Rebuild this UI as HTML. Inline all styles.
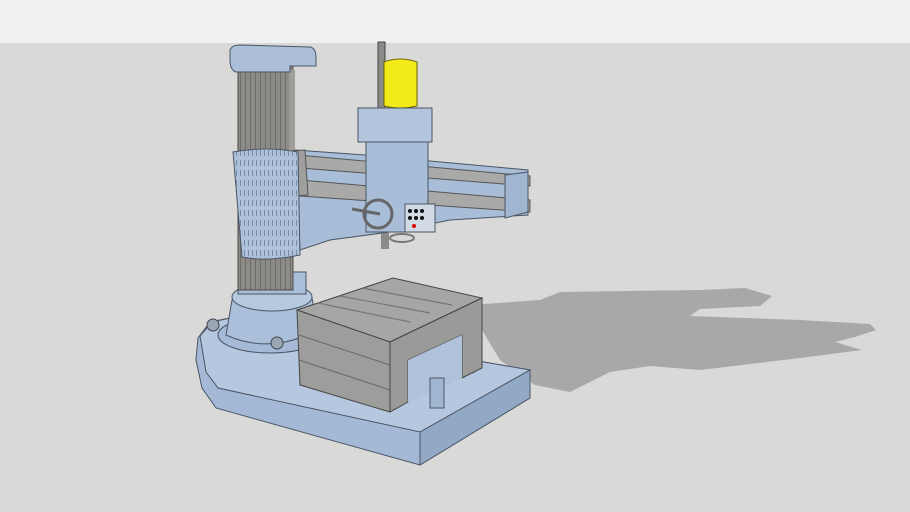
<!DOCTYPE html>
<html><head><style>html,body{margin:0;padding:0;width:910px;height:512px;overflow:hidden;background:#d9d9d7}</style></head>
<body>
<svg width="910" height="512" viewBox="0 0 910 512" xmlns="http://www.w3.org/2000/svg">
<defs>
<pattern id="col" width="5" height="10" patternUnits="userSpaceOnUse"><rect width="5" height="10" fill="#8d8b88"/><rect x="0" width="1" height="10" fill="#6e6c69"/></pattern>
<pattern id="slv" width="4" height="10" patternUnits="userSpaceOnUse"><rect width="4" height="10" fill="#aec1da"/><rect x="0" width="0.8" height="6" fill="#6e7f96"/></pattern>
</defs>
<rect x="0" y="0" width="910" height="43" fill="#eff1f3"/>
<rect x="0" y="43" width="910" height="469" fill="#d9d9d7"/>
<polygon fill="#a8a8a8" points="470,305 540,300 560,292 700,290 745,288 772,296 760,306 700,309 690,316 800,320 870,324 876,330 855,337 835,342 862,350 800,358 700,370 650,366 610,372 570,392 535,385 500,360 485,335"/>
<polygon fill="#a3b9d5" stroke="#4a5566" stroke-width="1" points="198,338 210,322 240,316 300,330 530,370 530,398 420,465 216,408 202,388 196,360"/>
<polygon fill="#b6c8df" stroke="#4a5566" stroke-width="1" points="200,336 212,322 240,316 300,330 530,370 420,432 218,388 206,372"/>
<polygon fill="#92a9c6" stroke="#4a5566" stroke-width="1" points="420,432 530,370 530,398 420,465"/>
<ellipse cx="270" cy="335" rx="52" ry="18" fill="#a4bad6" stroke="#4a5566"/>
<path d="M232,300 L226,335 Q270,355 318,330 L312,298 Z" fill="#a9bfda" stroke="#4a5566"/>
<ellipse cx="272" cy="297" rx="40" ry="14" fill="#b6c9df" stroke="#4a5566"/>
<rect x="238" y="272" width="68" height="22" fill="#a9bed8" stroke="#4a5566"/>
<g fill="#9aa6b4" stroke="#3d4550"><circle cx="213" cy="325" r="6"/><circle cx="277" cy="343" r="6"/><circle cx="438" cy="384" r="6"/><circle cx="471" cy="367" r="6"/></g>
<rect x="238" y="65" width="55" height="225" fill="url(#col)" stroke="#4a4a4a"/>
<rect x="289" y="70" width="6" height="90" fill="#a09e9a"/>
<path d="M230,50 Q232,45 240,45 L310,47 Q316,48 316,58 L316,66 L290,66 L290,72 L236,72 Q230,70 230,60Z" fill="#abbfd8" stroke="#4a5566"/>
<polygon fill="#a8bdd7" stroke="#4a5566" points="295,150 365,155 528,170 528,215 450,220 390,232 330,240 300,250"/>
<polygon fill="#a9a9a7" stroke="#555" points="298,155 530,176 530,186 300,168"/>
<polygon fill="#a9a9a7" stroke="#555" points="300,180 530,200 530,212 300,196"/>
<polygon fill="#a0b5cf" stroke="#4a5566" points="505,175 528,172 528,212 505,218"/>
<polygon fill="#9f9f9d" stroke="#555" points="275,152 305,150 308,195 277,197"/>
<path d="M233,152 Q266,146 298,152 L300,255 Q266,262 242,257 Z" fill="url(#slv)" stroke="#4a5566"/>
<rect x="378" y="42" width="7" height="68" fill="#8a8a88" stroke="#444"/>
<path d="M384,62 Q400,56 417,62 L417,106 Q400,110 384,106 Z" fill="#f3ea1a" stroke="#6a6400"/>
<rect x="358" y="108" width="74" height="34" fill="#b2c5dd" stroke="#4a5566"/>
<rect x="366" y="142" width="62" height="90" fill="#a8bdd7" stroke="#4a5566"/>
<rect x="405" y="204" width="30" height="28" fill="#d2dae4" stroke="#4a5566"/>
<g fill="#111"><circle cx="410" cy="211" r="2"/><circle cx="416" cy="211" r="2"/><circle cx="422" cy="211" r="2"/><circle cx="410" cy="218" r="2"/><circle cx="416" cy="218" r="2"/><circle cx="422" cy="218" r="2"/></g>
<circle cx="414" cy="226" r="2" fill="#d00"/>
<circle cx="378" cy="214" r="14" fill="none" stroke="#666" stroke-width="3"/>
<line x1="352" y1="209" x2="380" y2="214" stroke="#666" stroke-width="3"/>
<rect x="381" y="233" width="8" height="16" fill="#8a8a88"/>
<ellipse cx="402" cy="238" rx="12" ry="4" fill="none" stroke="#777" stroke-width="2"/>
<polygon fill="#a6a6a4" stroke="#444" points="297,310 393,278 482,298 390,342"/>
<g stroke="#777" stroke-width="1.2"><line x1="318" y1="303" x2="410" y2="322"/><line x1="340" y1="296" x2="430" y2="313"/><line x1="362" y1="288" x2="452" y2="305"/></g>
<polygon fill="#9d9d9b" stroke="#444" points="297,310 390,342 390,412 300,385"/>
<g stroke="#666"><line x1="299" y1="335" x2="390" y2="365"/><line x1="299" y1="360" x2="390" y2="390"/></g>
<polygon fill="#9a9a98" stroke="#444" points="390,342 482,298 482,368 462,378 462,335 408,360 408,402 390,412"/>
<polygon fill="#b0c2d9" points="408,360 462,335 462,378 408,402"/>
<rect x="430" y="378" width="14" height="30" fill="#a0b5d0" stroke="#4a5566"/>
</svg>
</body></html>
